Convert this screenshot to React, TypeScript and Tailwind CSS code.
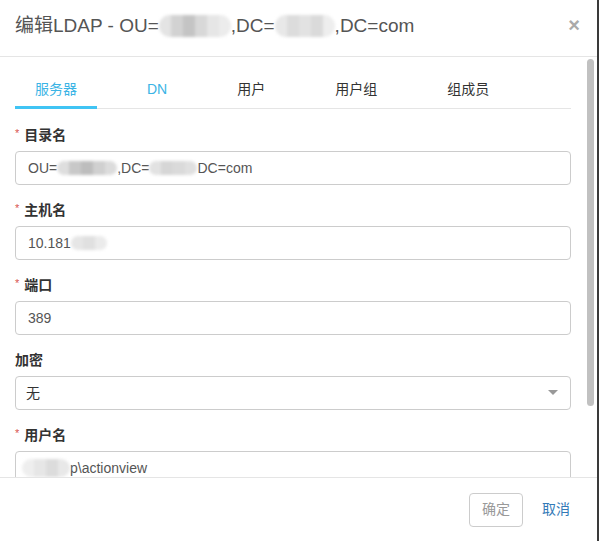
import React from "react";

const font = { fontFamily: '"Liberation Sans", "Noto Sans CJK SC", sans-serif' };

function Blur({ shades, h = "h-[14px]" }: { shades: string[]; h?: string }) {
  return (
    <span className={`inline-flex ${h} align-middle blur-[1.5px] rounded-full overflow-hidden`}>
      {shades.map((c, i) => (
        <span key={i} className="w-[12px] h-full" style={{ background: c }} />
      ))}
    </span>
  );
}

function Field({ label, required, children }: { label: string; required?: boolean; children: React.ReactNode }) {
  return (
    <div className="mb-[15px]">
      <div className="h-5 leading-5 mb-[6px] text-[14px] font-bold text-[#333] flex items-center">
        {required && <span className="text-[#d9534f] text-[11px] font-normal mr-[5px] -mt-[4px]">*</span>}
        {label}
      </div>
      {children}
    </div>
  );
}

function Input({ children }: { children: React.ReactNode }) {
  return (
    <div className="h-[34px] border border-[#ccc] rounded-[4px] px-3 flex items-center text-[14px] text-[#555] whitespace-nowrap overflow-hidden">
      {children}
    </div>
  );
}

const tabs = ["服务器", "DN", "用户", "用户组", "组成员"];

export default function App() {
  return (
    <div className="flex w-[599px] h-[541px] bg-white" style={font}>
      <div className="w-[597px] h-full flex flex-col bg-white">
        <div className="h-[57px] shrink-0 border-b border-[#e5e5e5] flex items-center justify-between pl-[15px] pr-[17px] pb-[4px]">
          <h4 className="text-[19px] text-[#555] whitespace-nowrap flex items-center">
            编辑LDAP - OU=
            <Blur h="h-[22px]" shades={["#e4e4e4", "#d2d2d2", "#c4c4c4", "#d8d8d8", "#e6e6e6", "#ececec"]} />
            ,DC=
            <Blur h="h-[22px]" shades={["#e8e8e8", "#dcdcdc", "#e2e2e2", "#dadada", "#eeeeee"]} />
            ,DC=com
          </h4>
          <span className="text-[20px] font-bold text-[#aaa] leading-none -mt-[3px]">×</span>
        </div>

        <div className="flex flex-1 min-h-0">
          <div className="flex-1 overflow-hidden px-[15px] pt-[15px]">
            <div className="flex border-b border-[#e5e5e5] mb-[16px]">
              {tabs.map((t, i) => (
                <div
                  key={t}
                  className={`h-[37px] leading-[34px] px-5 mr-[30px] text-[14px] -mb-px ${
                    i === 0 ? "border-b-[3px] border-[#40c4f4]" : ""
                  } ${i < 2 ? "text-[#3bb4e5]" : "text-[#333]"}`}
                >
                  {t}
                </div>
              ))}
            </div>

            <Field label="目录名" required>
              <Input>
                OU=
                <Blur shades={["#dedede", "#c8c8c8", "#bdbdbd", "#d0d0d0", "#dcdcdc"]} />
                ,DC=
                <Blur shades={["#e2e2e2", "#d6d6d6", "#dadada", "#e0e0e0"]} />
                DC=com
              </Input>
            </Field>
            <Field label="主机名" required>
              <Input>
                10.181
                <Blur shades={["#e6e6e6", "#e0e0e0", "#ebebeb"]} />
              </Input>
            </Field>
            <Field label="端口" required>
              <Input>389</Input>
            </Field>
            <Field label="加密">
              <div className="h-[34px] border border-[#ccc] rounded-[4px] pl-[10px] pr-[12px] flex items-center justify-between text-[14px] text-[#333]">
                <span>无</span>
                <svg width="10" height="6" viewBox="0 0 10 6">
                  <path d="M0 0h10L5 5z" fill="#999" />
                </svg>
              </div>
            </Field>
            <Field label="用户名" required>
              <div className="h-[34px] border border-[#ccc] rounded-[4px] pl-[6px] flex items-center text-[14px] text-[#555] whitespace-nowrap">
                <Blur h="h-[18px]" shades={["#eeeeee", "#e6e6e6", "#dcdcdc", "#e8e8e8"]} />
                p\actionview
              </div>
            </Field>
          </div>
          <div className="w-[11px] shrink-0 pl-[1px] pt-[2px]">
            <div className="w-[7px] h-[347px] rounded-[4px] bg-[#c1c1c1]" />
          </div>
        </div>

        <div className="h-[64px] shrink-0 border-t border-[#e5e5e5] flex items-center justify-end gap-[7px] px-[15px]">
          <button className="h-[34px] px-3 border border-[#ccc] rounded-[4px] text-[14px] text-[#999] bg-white">
            确定
          </button>
          <button className="h-[34px] px-3 text-[14px] text-[#337ab7]">取消</button>
        </div>
      </div>
      <div className="w-[2px] h-full bg-[#3a3a3a]" />
    </div>
  );
}
